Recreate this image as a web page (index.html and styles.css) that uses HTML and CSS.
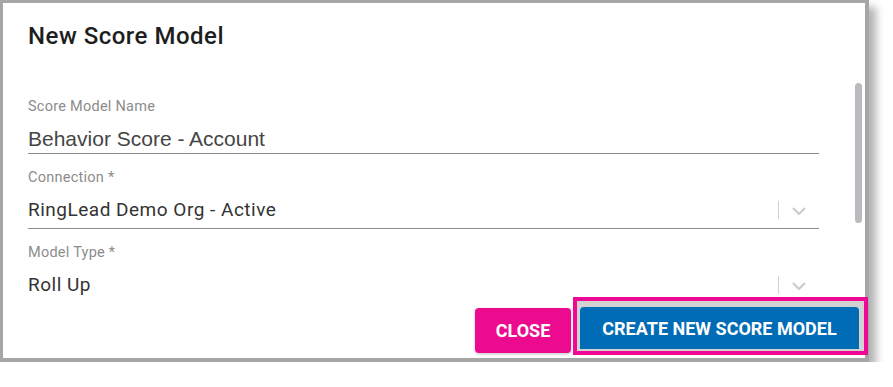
FILE: index.html
```html
<!DOCTYPE html>
<html>
<head>
<meta charset="utf-8">
<link rel="stylesheet" href="styles.css">
</head>
<body>
<div class="dialog">
  <div class="header"><h1 class="title">New Score Model</h1></div>
  <div class="body">
    <div class="fields">
      <div class="field">
        <div class="label">Score Model Name</div>
        <div class="row"><span class="value value-input">Behavior Score - Account</span></div>
      </div>
      <div class="field">
        <div class="label">Connection *</div>
        <div class="row">
          <span class="value">RingLead Demo Org - Active</span>
          <span class="indicators">
            <span class="sep"></span>
            <svg class="chev" width="14" height="8" viewBox="0 0 14 8"><path d="M1 1 L7 7 L13 1" fill="none" stroke="#cacaca" stroke-width="2"/></svg>
          </span>
        </div>
      </div>
      <div class="field">
        <div class="label">Model Type *</div>
        <div class="row">
          <span class="value">Roll Up</span>
          <span class="indicators">
            <span class="sep"></span>
            <svg class="chev" width="14" height="8" viewBox="0 0 14 8"><path d="M1 1 L7 7 L13 1" fill="none" stroke="#cacaca" stroke-width="2"/></svg>
          </span>
        </div>
      </div>
    </div>
    <div class="track"><div class="thumb"></div></div>
  </div>
  <div class="footer">
    <button class="btn btn-close">CLOSE</button>
    <span class="highlight"><button class="btn btn-create">CREATE NEW SCORE MODEL</button></span>
  </div>
</div>
</body>
</html>
```
FILE: styles.css
```css
html, body {
  margin: 0;
  padding: 0;
  background: #ffffff;
}
body {
  font-family: Roboto, "Liberation Sans", sans-serif;
}
.dialog {
  box-sizing: border-box;
  width: 869px;
  height: 362px;
  border-style: solid;
  border-color: #a6a6a6;
  border-width: 3px 4px 4px 3px;
  background: #ffffff;
  box-shadow: 7px 7px 8px rgba(0, 0, 0, 0.3);
  display: flex;
  flex-direction: column;
}
.header {
  padding: 20px 25px 0;
  height: 47px;
  box-sizing: border-box;
}
.title {
  margin: 0;
  font-size: 24px;
  line-height: 27px;
  font-weight: 500;
  letter-spacing: 0.5px;
  color: #1e1e1e;
}
.body {
  height: 246px;
  overflow: hidden;
  display: flex;
}
.fields {
  flex: 1;
  padding: 49px 36px 0 25px;
}
.field + .field {
  margin-top: 16px;
}
.label {
  font-size: 14.5px;
  line-height: 16px;
  letter-spacing: 0.25px;
  color: #8c8c8c;
}
.row {
  display: flex;
  align-items: center;
  padding: 13px 0 7px;
  border-bottom: 1px solid #8d8d8d;
}
.value {
  flex: 1;
  font-size: 19px;
  line-height: 22px;
  letter-spacing: 0.5px;
  color: #333333;
}
.field:first-child .row {
  padding: 12px 0 2px;
}
.value-input {
  font-family: "Liberation Sans", Arial, sans-serif;
  font-size: 21px;
  line-height: 24px;
  letter-spacing: 0;
  color: #454545;
}
.indicators {
  display: flex;
  align-items: center;
}
.sep {
  width: 1px;
  height: 18px;
  background: #d0d0d0;
}
.chev {
  display: block;
  margin: 2px 13px 0;
}
.track {
  width: 10px;
  padding-top: 33px;
}
.thumb {
  width: 7px;
  height: 140px;
  border-radius: 4px;
  background: #b9b9be;
}
.footer {
  flex: 1;
  display: flex;
  justify-content: flex-end;
  align-items: flex-start;
}
.btn {
  border: 0;
  padding: 0;
  color: #ffffff;
  font-family: Roboto, "Liberation Sans", sans-serif;
  font-weight: 700;
  font-size: 18px;
  cursor: pointer;
}
.btn-close {
  margin-top: 12px;
  width: 96px;
  height: 45px;
  border-radius: 4px;
  background: #ec0b8f;
  box-shadow: 0 1px 3px rgba(0, 0, 0, 0.25);
}
.highlight {
  margin: 1px -3px 0 2px;
  border: 4px solid #ee0894;
  padding: 6px 5px 2px 3px;
  background: #d2d2d2;
  display: flex;
}
.btn-create {
  width: 279px;
  height: 42px;
  border-radius: 4px 4px 0 0;
  background: #006cb6;
}
```
